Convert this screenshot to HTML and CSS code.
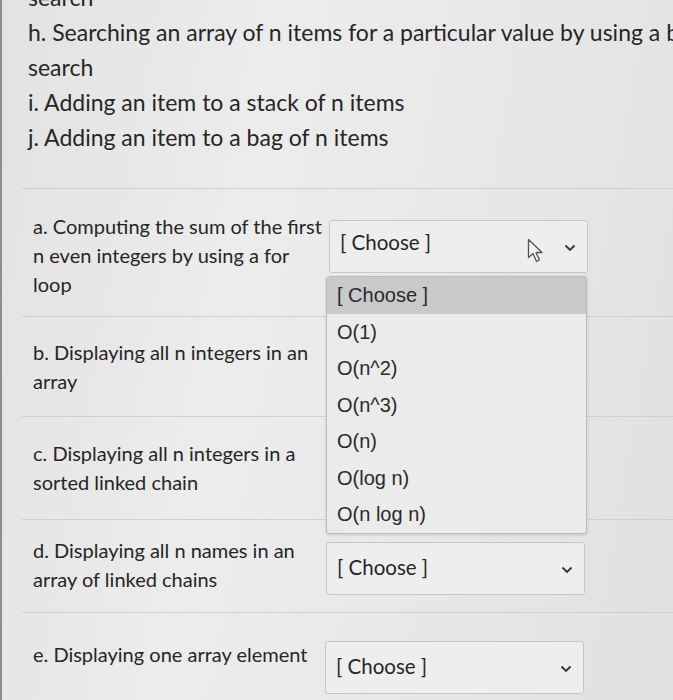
FILE: index.html
```html
<!DOCTYPE html>
<html>
<head>
<meta charset="utf-8">
<link rel="stylesheet" href="styles.css">
</head>
<body>
<div class="page">
  <div class="items">
    <div class="item clipped">search</div>
    <div class="item">h. Searching an array of n items for a particular value by using a binary</div>
    <div class="item">search</div>
    <div class="item">i. Adding an item to a stack of n items</div>
    <div class="item">j. Adding an item to a bag of n items</div>
  </div>

  <div class="matches">
    <div class="row row-a">
      <div class="label">a. Computing the sum of the first n even integers by using a for loop</div>
      <div class="control">
        <div class="select open">
          <span class="value">[ Choose ]</span>
          <svg class="cursor" width="18" height="26" viewBox="0 0 18 26"><path d="M1.5 1.5 L1.5 19.5 L6 15.5 L9.5 23.5 L12.5 22 L9 14.5 L15 14.5 Z" fill="#f2f2f2" stroke="#555" stroke-width="1.3" stroke-linejoin="round"/></svg>
          <svg class="chev" width="12" height="8" viewBox="0 0 12 8"><path d="M1.5 1.5 L6 6 L10.5 1.5" fill="none" stroke="#333" stroke-width="1.8"/></svg>
        </div>
        <ul class="menu">
          <li class="hl">[ Choose ]</li>
          <li>O(1)</li>
          <li>O(n^2)</li>
          <li>O(n^3)</li>
          <li>O(n)</li>
          <li>O(log n)</li>
          <li>O(n log n)</li>
        </ul>
      </div>
    </div>

    <div class="row row-b">
      <div class="label">b. Displaying all n integers in an array</div>
      <div class="control">
        <div class="select"><span class="value">[ Choose ]</span><svg class="chev" width="12" height="8" viewBox="0 0 12 8"><path d="M1.5 1.5 L6 6 L10.5 1.5" fill="none" stroke="#333" stroke-width="1.8"/></svg></div>
      </div>
    </div>

    <div class="row row-c">
      <div class="label">c. Displaying all n integers in a sorted linked chain</div>
      <div class="control">
        <div class="select"><span class="value">[ Choose ]</span><svg class="chev" width="12" height="8" viewBox="0 0 12 8"><path d="M1.5 1.5 L6 6 L10.5 1.5" fill="none" stroke="#333" stroke-width="1.8"/></svg></div>
      </div>
    </div>

    <div class="row row-d">
      <div class="label">d. Displaying all n names in an array of linked chains</div>
      <div class="control">
        <div class="select"><span class="value">[ Choose ]</span><svg class="chev" width="12" height="8" viewBox="0 0 12 8"><path d="M1.5 1.5 L6 6 L10.5 1.5" fill="none" stroke="#333" stroke-width="1.8"/></svg></div>
      </div>
    </div>

    <div class="row row-e">
      <div class="label">e. Displaying one array element</div>
      <div class="control">
        <div class="select"><span class="value">[ Choose ]</span><svg class="chev" width="12" height="8" viewBox="0 0 12 8"><path d="M1.5 1.5 L6 6 L10.5 1.5" fill="none" stroke="#333" stroke-width="1.8"/></svg></div>
      </div>
    </div>
  </div>
</div>
</body>
</html>
```
FILE: styles.css
```css
html, body {
  margin: 0;
  padding: 0;
  height: 100%;
  overflow: hidden;
}
body {
  background: linear-gradient(100deg, #e2e2e2 0%, #ececec 35%, #e9e9ea 60%, #e0e0e0 100%);
  font-family: Lato, "Open Sans", sans-serif;
  color: #262626;
  border-left: 2px solid #8c8c8c;
  box-sizing: border-box;
}
.page {
  padding-left: 20px;
  white-space: nowrap;
}
.items {
  margin-top: -20px;
  padding-left: 6px;
  padding-bottom: 33px;
  font-size: 23px;
  line-height: 35px;
}
.item {
  white-space: nowrap;
}
.matches {
  border-top: 1px solid #cfcfcf;
}
.row {
  display: flex;
  align-items: flex-start;
  padding: 22px 0 19px 11px;
  border-bottom: 1px solid #d0d0d0;
  font-size: 20px;
  line-height: 29px;
}
.row-a { padding-top: 23px; padding-bottom: 17px; }
.row-b { padding-top: 21px; padding-bottom: 20px; }
.row-c { padding-top: 22px; padding-bottom: 22px; }
.row-d { padding-top: 16px; padding-bottom: 17px; }
.row-e { padding-top: 27px; border-bottom: none; }
.label {
  width: 296px;
  white-space: normal;
  flex: none;
}
.control {
  position: relative;
  margin-left: -3px;
  margin-top: 5px;
}
.row-a .control { margin-top: 8px; margin-left: 0; }
.row-d .control { margin-top: 6px; }
.row-e .control { margin-top: 1px; margin-left: -4px; }
.select {
  position: relative;
  width: 257px;
  height: 51px;
  border: 1px solid #c6c6c6;
  border-radius: 3px;
  background: #eeeeee;
  display: flex;
  align-items: center;
  box-sizing: content-box;
}
.select.open {
  align-items: flex-start;
}
.select.open .value { margin-top: 7px; }
.value {
  padding-left: 10px;
  font-size: 20.5px;
  margin-top: -2px;
}
.chev {
  position: absolute;
  right: 11px;
  top: 23px;
}
.cursor {
  position: absolute;
  left: 197px;
  top: 17px;
}
.menu {
  position: absolute;
  left: -3px;
  top: 56px;
  width: 259px;
  margin: 0;
  padding: 0;
  list-style: none;
  background: #ebebeb;
  border: 1px solid #bdbdbd;
  border-radius: 3px;
  box-shadow: 0 1px 3px rgba(0,0,0,0.15);
  z-index: 5;
  font-family: "Liberation Sans", Arial, sans-serif;
  font-size: 20px;
}
.menu li {
  height: 36.5px;
  line-height: 36.5px;
  padding-left: 10px;
  color: #2a2a2a;
}
.menu li.hl {
  background: #c9c9c9;
}
```
